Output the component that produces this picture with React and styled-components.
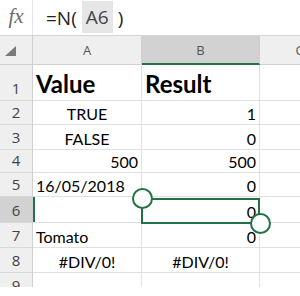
import React from "react";
import styled, { createGlobalStyle, css } from "styled-components";

const GREEN = "#217346";

const GlobalStyle = createGlobalStyle`
  html, body { margin: 0; padding: 0; background: #fff; }
  body { font-family: Lato, "Open Sans", sans-serif; color: #000; }
`;

const Page = styled.div`
  width: 300px;
  height: 296px;
  overflow: hidden;
  background: #fff;
`;

const FormulaBar = styled.div`
  display: flex;
  height: 36px;
  box-sizing: border-box;
  border-bottom: 1px solid #d4d4d4;
`;

const FxBox = styled.div`
  width: 33px;
  box-sizing: border-box;
  border-right: 1px solid #e3e3e3;
  display: flex;
  align-items: center;
  justify-content: center;
  font-family: "Liberation Serif", serif;
  font-style: italic;
  font-size: 21px;
  color: #6a6a6a;
  padding-bottom: 3px;
`;

const Formula = styled.div`
  display: flex;
  align-items: center;
  padding-left: 13px;
  font-family: "Open Sans", sans-serif;
  font-size: 19px;
  color: #222;
  gap: 5px;
`;

const RefToken = styled.span`
  display: flex;
  align-items: center;
  height: 32px;
  margin-top: -2px;
  padding: 0 4px;
  background: #e6e6e6;
  color: #444;
`;

const Sheet = styled.div`
  display: grid;
  grid-template-columns: 33px 109px 118px 80px;
  grid-template-rows: 29px 36px 24px 25px 23px 24px 26px 25px 25px 25px;
  height: 251px;
  overflow: hidden;
`;

const HeaderCell = styled.div`
  box-sizing: border-box;
  background: ${(p) => (p.$active ? "#d2d2d2" : "#efefef")};
  border-right: 1px solid #d0d0d0;
  border-bottom: ${(p) => (p.$active ? `2px solid ${GREEN}` : "1px solid #d0d0d0")};
  display: flex;
  align-items: center;
  justify-content: center;
  font-family: "Open Sans", sans-serif;
  font-size: 13px;
  color: #555;
`;

const Corner = styled(HeaderCell)`
  align-items: flex-end;
  justify-content: flex-start;
  padding: 0 0 8px 5px;
`;

const RowHeader = styled.div`
  box-sizing: border-box;
  background: ${(p) => (p.$active ? "#d2d2d2" : "#efefef")};
  border-right: 1px solid #d0d0d0;
  border-bottom: 1px solid #d8d8d8;
  display: flex;
  align-items: flex-end;
  justify-content: center;
  padding-bottom: 2px;
  font-family: "Open Sans", sans-serif;
  font-size: 15px;
  color: #444;
`;

const Cell = styled.div`
  box-sizing: border-box;
  border-right: 1px solid #e1e1e1;
  border-bottom: 1px solid #e1e1e1;
  display: flex;
  align-items: flex-end;
  justify-content: ${(p) =>
    p.$align === "right" ? "flex-end" : p.$align === "center" ? "center" : "flex-start"};
  padding: 0 3px 1px 3px;
  font-size: ${(p) => (p.$bold ? "24px" : "16px")};
  font-weight: ${(p) => (p.$bold ? 700 : 400)};
  line-height: 1.2;
  white-space: nowrap;
  ${(p) =>
    p.$leftMark &&
    css`
      box-shadow: inset 2px 0 0 ${GREEN};
    `}
  ${(p) =>
    p.$selected &&
    css`
      position: relative;
      z-index: 2;
    `}
`;

const SelectionBox = styled.div`
  position: absolute;
  left: -1px;
  top: 1px;
  right: -1px;
  bottom: -2px;
  border: 2px solid ${GREEN};
  pointer-events: none;
`;

const Handle = styled.div`
  position: absolute;
  width: 17px;
  height: 17px;
  border-radius: 50%;
  background: #fff;
  border: 2px solid ${GREEN};
  ${(p) =>
    p.$pos === "tl"
      ? css`
          left: -10px;
          top: -9px;
        `
      : css`
          right: -12px;
          bottom: -12px;
        `}
`;

const CornerTriangle = () => (
  <svg width="11" height="10" viewBox="0 0 11 10">
    <polygon points="11,0 11,10 0,10" fill="#7a7a7a" />
  </svg>
);

const rows = [
  { n: 1, a: "Value", b: "Result", bold: true, aAlign: "left", bAlign: "left" },
  { n: 2, a: "TRUE", b: "1", aAlign: "center", bAlign: "right" },
  { n: 3, a: "FALSE", b: "0", aAlign: "center", bAlign: "right" },
  { n: 4, a: "500", b: "500", aAlign: "right", bAlign: "right" },
  { n: 5, a: "16/05/2018", b: "0", aAlign: "left", bAlign: "right" },
  { n: 6, a: "", b: "0", aAlign: "left", bAlign: "right", active: true },
  { n: 7, a: "Tomato", b: "0", aAlign: "left", bAlign: "right" },
  { n: 8, a: "#DIV/0!", b: "#DIV/0!", aAlign: "center", bAlign: "center" },
  { n: 9, a: "", b: "", aAlign: "left", bAlign: "left" },
];

export default function App() {
  return (
    <Page>
      <GlobalStyle />
      <FormulaBar>
        <FxBox>fx</FxBox>
        <Formula>
          <span>=N(</span>
          <RefToken>A6</RefToken>
          <span>)</span>
        </Formula>
      </FormulaBar>
      <Sheet>
        <Corner>
          <CornerTriangle />
        </Corner>
        <HeaderCell>A</HeaderCell>
        <HeaderCell $active>B</HeaderCell>
        <HeaderCell>C</HeaderCell>
        {rows.map((r) => (
          <React.Fragment key={r.n}>
            <RowHeader $active={r.active}>{r.n}</RowHeader>
            <Cell $align={r.aAlign} $bold={r.bold} $leftMark={r.active}>
              {r.a}
            </Cell>
            <Cell $align={r.bAlign} $bold={r.bold} $selected={r.active}>
              {r.b}
              {r.active && (
                <>
                  <SelectionBox />
                  <Handle $pos="tl" />
                  <Handle $pos="br" />
                </>
              )}
            </Cell>
            <Cell />
          </React.Fragment>
        ))}
      </Sheet>
    </Page>
  );
}
